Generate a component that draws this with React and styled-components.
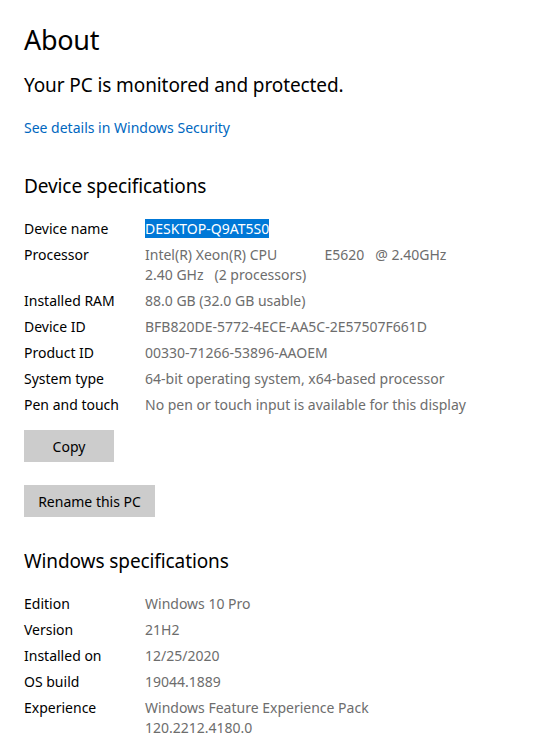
import React from 'react'
import styled, { createGlobalStyle } from 'styled-components'

const GlobalStyle = createGlobalStyle`
    html, body {
        margin: 0;
        background: #fff;
    }
    body {
        font-family: "Noto Sans", "Open Sans", sans-serif;
        color: #000;
    }
`

const deviceSpecs = [
    { label: 'Device name', value: 'DESKTOP-Q9AT5S0', selected: true },
    { label: 'Processor', value: 'Intel(R) Xeon(R) CPU             E5620   @ 2.40GHz\n2.40 GHz   (2 processors)' },
    { label: 'Installed RAM', value: '88.0 GB (32.0 GB usable)' },
    { label: 'Device ID', value: 'BFB820DE-5772-4ECE-AA5C-2E57507F661D' },
    { label: 'Product ID', value: '00330-71266-53896-AAOEM' },
    { label: 'System type', value: '64-bit operating system, x64-based processor' },
    { label: 'Pen and touch', value: 'No pen or touch input is available for this display' },
]

const windowsSpecs = [
    { label: 'Edition', value: 'Windows 10 Pro' },
    { label: 'Version', value: '21H2' },
    { label: 'Installed on', value: '12/25/2020' },
    { label: 'OS build', value: '19044.1889' },
    { label: 'Experience', value: 'Windows Feature Experience Pack\n120.2212.4180.0' },
]

const SpecList = ({ items }) => (
    <Specs>
        {items.map(item => (
            <SpecRow key={item.label}>
                <Label>{item.label}</Label>
                <Value>
                    {item.selected ? <Selected>{item.value}</Selected> : item.value}
                </Value>
            </SpecRow>
        ))}
    </Specs>
)

const App = () => {
    return (
        <Page>
            <GlobalStyle />
            <Title>About</Title>
            <Status>Your PC is monitored and protected.</Status>
            <Link href="#">See details in Windows Security</Link>

            <SectionTitle $top={34}>Device specifications</SectionTitle>
            <SpecList items={deviceSpecs} />
            <Button $width={90}>Copy</Button>
            <Button $width={131}>Rename this PC</Button>

            <SectionTitle $top={7}>Windows specifications</SectionTitle>
            <SpecList items={windowsSpecs} />
        </Page>
    )
}

export default App

const Page = styled.main`
    display: flex;
    flex-direction: column;
    align-items: flex-start;
    padding: 20px 24px 0;
`

const Title = styled.h1`
    margin: 0;
    font-size: 27px;
    font-weight: 400;
    line-height: 40px;
    letter-spacing: -0.3px;
`

const Status = styled.p`
    margin: 11px 0 0;
    font-size: 19px;
    line-height: 28px;
    letter-spacing: -0.1px;
`

const Link = styled.a`
    margin-top: 19px;
    font-size: 14px;
    line-height: 20px;
    color: #0067c0;
    text-decoration: none;
`

const SectionTitle = styled.h2`
    margin: ${p => p.$top}px 0 0;
    font-size: 19px;
    font-weight: 400;
    line-height: 28px;
    letter-spacing: -0.1px;
`

const Specs = styled.div`
    display: flex;
    flex-direction: column;
    gap: 6px;
    margin-top: 19px;
    margin-bottom: 15px;
`

const SpecRow = styled.div`
    display: grid;
    grid-template-columns: 121px auto;
    font-size: 14px;
    line-height: 20px;
`

const Label = styled.span`
    color: #000;
`

const Value = styled.span`
    color: #6d6d6d;
    white-space: pre;
`

const Selected = styled.span`
    background: #0078d7;
    color: #fff;
`

const Button = styled.button`
    width: ${p => p.$width}px;
    height: 32px;
    margin-bottom: 23px;
    border: none;
    background: #cccccc;
    font-family: inherit;
    font-size: 14px;
    color: #000;
    padding: 0;
`
